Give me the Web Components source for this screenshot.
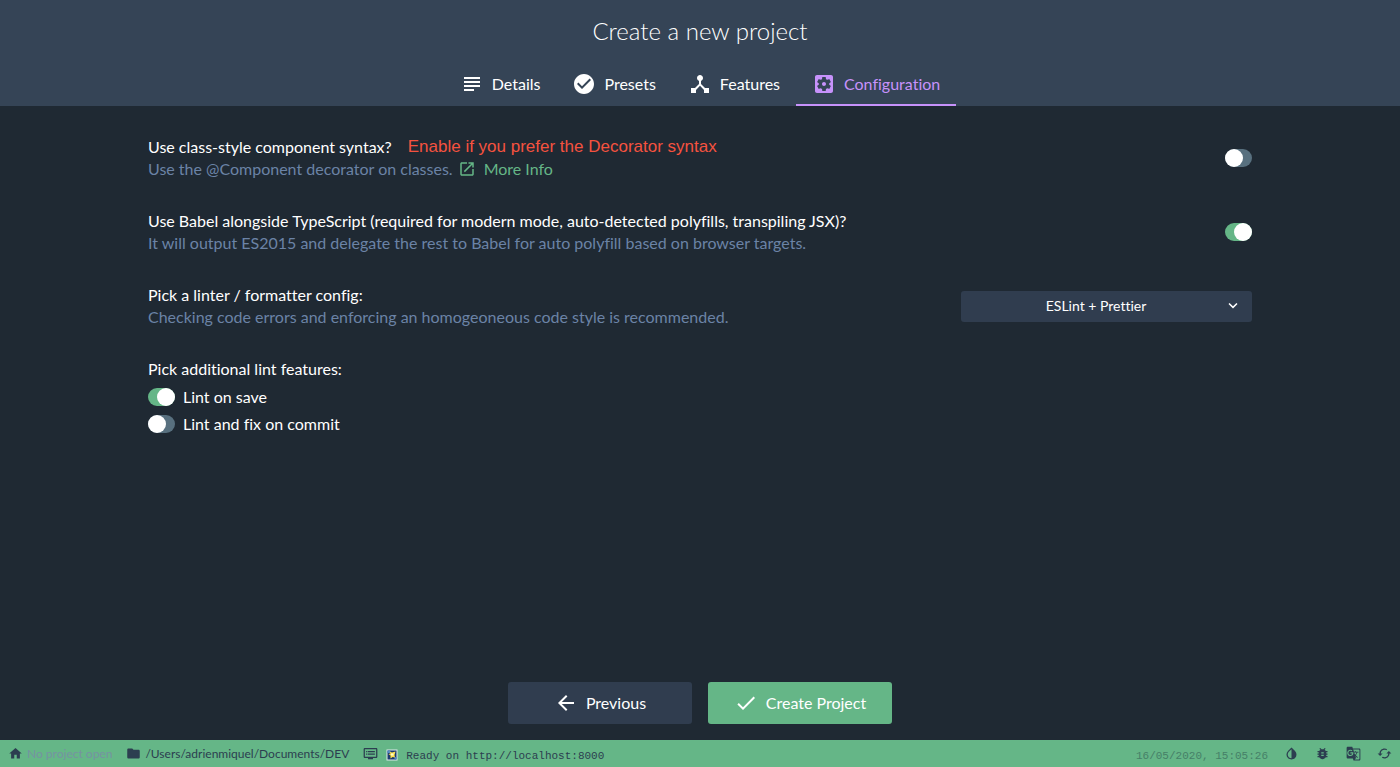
<!DOCTYPE html>
<html lang="en">
<head>
<meta charset="utf-8">
<meta name="viewport" content="width=device-width, initial-scale=1">
<title>Create a new project</title>
<style>
  body { margin: 0; background: #1f2933; color: #fff; font: 16px/22px Lato, "Open Sans", sans-serif;
    font-variant-ligatures: none; }
</style>
</head>
<body>
<project-wizard></project-wizard>
<script>
const ICONS = {
  subject: '<path d="M4 4h16v2H4zM4 8h16v2H4zM4 12h16v2H4zM4 16h10v2H4z" transform="translate(0 1)"/>',
  check_circle: '<path d="M12 2C6.48 2 2 6.48 2 12s4.48 10 10 10 10-4.48 10-10S17.52 2 12 2zm-2 15l-5-5 1.41-1.41L10 14.17l7.59-7.59L19 8l-9 9z"/>',
  device_hub: '<path d="M17 16l-4-4V8.82C14.16 8.4 15 7.3 15 6c0-1.66-1.34-3-3-3S9 4.34 9 6c0 1.3.84 2.4 2 2.82V12l-4 4H3v5h5v-3.05l4-4.2 4 4.2V21h5v-5h-4z"/>',
  settings: '<path d="M12 10c-1.1 0-2 .9-2 2s.9 2 2 2 2-.9 2-2-.9-2-2-2zm7-7H5c-1.11 0-2 .9-2 2v14c0 1.1.89 2 2 2h14c1.11 0 2-.9 2-2V5c0-1.1-.89-2-2-2zm-1.75 9c0 .23-.02.46-.05.68l1.48 1.16c.13.11.17.3.08.45l-1.4 2.42c-.09.15-.27.21-.43.15l-1.74-.7c-.36.28-.76.51-1.18.69l-.26 1.85c-.03.17-.18.3-.35.3h-2.8c-.17 0-.32-.13-.35-.29l-.26-1.85c-.43-.18-.82-.41-1.18-.69l-1.74.7c-.16.06-.34 0-.43-.15l-1.4-2.42c-.09-.15-.05-.34.08-.45l1.48-1.16c-.03-.23-.05-.46-.05-.69 0-.23.02-.46.05-.68l-1.48-1.16c-.13-.11-.17-.3-.08-.45l1.4-2.42c.09-.15.27-.21.43-.15l1.74.7c.36-.28.76-.51 1.18-.69l.26-1.85c.03-.17.18-.3.35-.3h2.8c.17 0 .32.13.35.29l.26 1.85c.43.18.82.41 1.18.69l1.74-.7c.16-.06.34 0 .43.15l1.4 2.42c.09.15.05.34-.08.45l-1.48 1.16c.03.23.05.46.05.69z"/>',
  open_in_new: '<path d="M19 19H5V5h7V3H5c-1.11 0-2 .9-2 2v14c0 1.1.89 2 2 2h14c1.1 0 2-.9 2-2v-7h-2v7zM14 3v2h3.59l-9.83 9.83 1.41 1.41L19 6.41V10h2V3h-7z"/>',
  expand: '<path d="M7.41 7.84L12 12.42l4.59-4.58L18 9.25l-6 6-6-6z"/>',
  back: '<path d="M20 11H7.83l5.59-5.59L12 4l-8 8 8 8 1.41-1.41L7.83 13H20v-2z"/>',
  done: '<path d="M9 16.2L4.8 12l-1.4 1.4L9 19 21 7l-1.4-1.4L9 16.2z"/>',
  home: '<path d="M10 20v-6h4v6h5v-8h3L12 3 2 12h3v8z"/>',
  folder: '<path d="M10 4H4c-1.1 0-1.99.9-1.99 2L2 18c0 1.1.9 2 2 2h16c1.1 0 2-.9 2-2V8c0-1.1-.9-2-2-2h-8l-2-2z"/>',
  dvr: '<path d="M21 3H3c-1.1 0-2 .9-2 2v12c0 1.1.9 2 2 2h5v2h8v-2h5c1.1 0 1.99-.9 1.99-2L23 5c0-1.1-.9-2-2-2zm0 14H3V5h18v12zm-2-9H8v2h11V8zm0 4H8v2h11v-2zM7 8H5v2h2V8zm0 4H5v2h2v-2z"/>',
  sparkle: '<path fill="#dfe9ea" d="M1 1h22v22H1z"/><path fill="#1c3a6e" d="M3 3h18v18H3z"/><path fill="#4c86c6" d="M3 3h6v5H3zM17 16h4v5h-4z"/><path fill="#ffe14a" d="M7 5l5 2 7-2-2 7 1 5-5-1-4 3v-6l-4-3 4-1z"/><path fill="#fffbd0" d="M10 9h5v4h-5z"/>',
  invert: '<path d="M17.66 7.93L12 2.27 6.34 7.93c-3.12 3.12-3.12 8.19 0 11.31C7.9 20.8 9.95 21.58 12 21.58s4.1-.78 5.66-2.34c3.12-3.12 3.12-8.19 0-11.31zM12 19.59c-1.6 0-3.11-.62-4.24-1.76C6.62 16.69 6 15.19 6 13.59s.62-3.11 1.76-4.24L12 5.1v14.49z"/>',
  bug: '<path d="M20 8h-2.81c-.45-.78-1.07-1.45-1.82-1.96L17 4.41 15.59 3l-2.17 2.17C12.96 5.06 12.49 5 12 5s-.96.06-1.41.17L8.41 3 7 4.41l1.62 1.63C7.88 6.55 7.26 7.22 6.81 8H4v2h2.09c-.05.33-.09.66-.09 1v1H4v2h2v1c0 .34.04.67.09 1H4v2h2.81c1.04 1.79 2.97 3 5.19 3s4.15-1.21 5.19-3H20v-2h-2.09c.05-.33.09-.66.09-1v-1h2v-2h-2v-1c0-.34-.04-.67-.09-1H20V8zm-6 8h-4v-2h4v2zm0-4h-4v-2h4v2z"/>',
  translate: '<path d="M21 4H11l-1-3H3c-1.1 0-2 .9-2 2v15c0 1.1.9 2 2 2h8l1 3h9c1.1 0 2-.9 2-2V6c0-1.1-.9-2-2-2zM7 16c-2.76 0-5-2.24-5-5s2.24-5 5-5c1.35 0 2.48.5 3.35 1.3L9.03 8.57c-.38-.36-1.04-.78-2.03-.78-1.74 0-3.15 1.44-3.15 3.21S5.26 14.21 7 14.21c2.01 0 2.84-1.44 2.92-2.41H7v-1.71h4.68c.07.31.12.61.12 1.02C11.8 13.97 9.89 16 7 16zm6.17-5.42h3.7c-.43 1.25-1.11 2.43-2.05 3.47-.31-.35-.6-.72-.86-1.1l-.79-2.37zm8.33 9.92c0 .55-.45 1-1 1H14l2-2.5-1.04-3.1 3.1 3.1.92-.92-3.3-3.25.02-.02c1.13-1.25 1.93-2.69 2.4-4.22H20v-1.3h-4.53V8h-1.29v1.29h-1.44L11.46 5.5h9.04c.55 0 1 .45 1 1v14z"/>',
  loop: '<path d="M19 8l-4 4h3c0 3.31-2.69 6-6 6-1.01 0-1.97-.25-2.8-.7l-1.46 1.46C8.97 19.54 10.43 20 12 20c4.42 0 8-3.58 8-8h3l-4-4zM6 12c0-3.31 2.69-6 6-6 1.01 0 1.97.25 2.8.7l1.46-1.46C15.03 4.46 13.57 4 12 4c-4.42 0-8 3.58-8 8H1l4 4 4-4H6z"/>'
};

const TOGGLE_CSS = `
  input[type=checkbox] { appearance: none; flex: none; margin: 0; width: 27px; height: 18px;
    border-radius: 9px; background: #58707f; cursor: pointer; display: flex; }
  input[type=checkbox]::before { content: ""; width: 18px; height: 18px; border-radius: 50%; background: #fff; }
  input[type=checkbox]:checked { background: #65b687; justify-content: flex-end; }
`;

function define(name, render) {
  customElements.define(name, class extends HTMLElement {
    connectedCallback() {
      if (!this.shadowRoot) this.attachShadow({ mode: 'open' }).innerHTML = render(this);
    }
  });
}

define('ui-icon', el => `
  <style>
    :host { display: block; flex: none; width: var(--icon-size, 24px); height: var(--icon-size, 24px); }
    svg { display: block; width: 100%; height: 100%; fill: currentColor; }
  </style>
  <svg viewBox="0 0 24 24" aria-hidden="true">${ICONS[el.getAttribute('name')]}</svg>`);

define('wizard-tab', el => `
  <style>
    :host { display: block; }
    a { display: flex; align-items: center; gap: 8px; height: 42px; box-sizing: border-box; padding: 0 16px;
      border-bottom: 2px solid transparent; color: #fff; text-decoration: none; }
    a[aria-current] { color: #c792fb; border-color: #c792fb; }
  </style>
  <a href="#${el.getAttribute('icon')}" ${el.hasAttribute('active') ? 'aria-current="step"' : ''}>
    <ui-icon name="${el.getAttribute('icon')}"></ui-icon><slot></slot>
  </a>`);

define('config-prompt', el => {
  const kind = el.getAttribute('kind');
  const control = kind === 'select'
    ? `<div class="select"><select id="control"><option>ESLint + Prettier</option></select><ui-icon name="expand"></ui-icon></div>`
    : `<input type="checkbox" role="switch" id="control" ${el.hasAttribute('checked') ? 'checked' : ''}>`;
  return `
  <style>
    :host { display: flex; align-items: center; justify-content: space-between; gap: 24px; }
    .title { display: flex; flex-wrap: wrap; column-gap: 16px; }
    .description { display: flex; flex-wrap: wrap; align-items: center; column-gap: 5px; color: #6b83a6; }
    ::slotted([slot=note]) { color: #f5523f; font: 17px/22px "Liberation Sans", Arial, sans-serif; }
    .select { display: grid; align-items: center; flex: 0 1 291px; }
    .select > * { grid-area: 1 / 1; }
    .select ui-icon { --icon-size: 18px; justify-self: end; margin-right: 10px; pointer-events: none; }
    select { appearance: none; width: 100%; height: 31px; border: 0; border-radius: 3px; padding: 0 32px 0 11px;
      background: #303d4f; color: #fff; font: 14px/22px Lato, sans-serif; font-variant-ligatures: none;
      text-align-last: center; }
    ${TOGGLE_CSS}
  </style>
  <div>
    <div class="title"><label for="control">${el.getAttribute('heading')}</label><slot name="note"></slot></div>
    <div class="description"><slot></slot></div>
  </div>
  ${control}`;
});

define('info-link', el => `
  <style>
    :host { display: block; }
    a { display: flex; align-items: center; gap: 8px; color: #65b687; text-decoration: none; --icon-size: 18px; }
  </style>
  <a href="${el.getAttribute('to')}"><ui-icon name="open_in_new"></ui-icon><slot></slot></a>`);

define('lint-toggle', el => `
  <style>
    :host { display: block; }
    label { display: flex; align-items: center; gap: 8px; line-height: 21px; }
    ${TOGGLE_CSS}
  </style>
  <label><input type="checkbox" role="switch" ${el.hasAttribute('checked') ? 'checked' : ''}><slot></slot></label>`);

define('wizard-button', el => `
  <style>
    :host { display: block; width: 184px; }
    button { display: flex; align-items: center; justify-content: center; gap: 8px; width: 100%; height: 42px;
      border: 0; border-radius: 3px; padding: 0 16px; background: #303d4f; color: #fff;
      font: 16px/22px Lato, sans-serif; font-variant-ligatures: none; cursor: pointer; }
    :host([primary]) button { background: #65b687; }
  </style>
  <button type="button"><ui-icon name="${el.getAttribute('icon')}"></ui-icon><slot></slot></button>`);

define('status-bar', () => `
  <style>
    :host { display: flex; align-items: center; justify-content: space-between; height: 27px; padding: 0 8px;
      background: #65b687; color: #2c3e50; font-size: 12px; --icon-size: 15px; }
    .group, .item { display: flex; align-items: center; }
    .group { gap: 16px; }
    .group.start { gap: 14px; }
    .item { gap: 4px; }
    .muted { color: #7692a2; }
    .log { gap: 8px; }
    .mono { font: 11px/16px "Liberation Mono", "Courier New", monospace; padding-top: 4px; }
    .log .emoji { --icon-size: 12px; padding-top: 2px; }
    time { color: #458068; }
    button { border: 0; padding: 0; background: none; color: inherit; }
  </style>
  <div class="group start">
    <span class="item"><ui-icon name="home"></ui-icon><span class="muted">No project open</span></span>
    <span class="item"><ui-icon name="folder"></ui-icon><span>/Users/adrienmiquel/Documents/DEV</span></span>
    <span class="item log"><ui-icon name="dvr"></ui-icon><span class="emoji"><ui-icon name="sparkle"></ui-icon></span><span class="mono">Ready on http://localhost:8000</span></span>
  </div>
  <div class="group">
    <time class="mono" datetime="2020-05-16T15:05:26">16/05/2020, 15:05:26</time>
    <button type="button" aria-label="Toggle dark mode"><ui-icon name="invert"></ui-icon></button>
    <button type="button" aria-label="Report a bug"><ui-icon name="bug"></ui-icon></button>
    <button type="button" aria-label="Translate"><ui-icon name="translate"></ui-icon></button>
    <button type="button" aria-label="Refresh"><ui-icon name="loop"></ui-icon></button>
  </div>`);

define('project-wizard', () => `
  <style>
    :host { display: flex; flex-direction: column; min-height: 100vh; }
    header { background: #354456; text-align: center; }
    h1 { margin: 0; padding: 16px 16px 18px; font-size: 24px; line-height: 30px; font-weight: 300; }
    nav { display: flex; justify-content: center; flex-wrap: wrap; }
    main { flex: 1; width: calc(100% - 32px); max-width: 1104px; margin: 0 auto; padding: 30px 0;
      box-sizing: border-box; display: flex; flex-direction: column; gap: 30px; }
    fieldset { border: 0; margin: 0; padding: 0; display: flex; flex-direction: column; gap: 6px; }
    legend { padding: 0 0 6px; }
    .actions { display: flex; justify-content: center; gap: 16px; padding: 16px; }
  </style>
  <header>
    <h1>Create a new project</h1>
    <nav>
      <wizard-tab icon="subject">Details</wizard-tab>
      <wizard-tab icon="check_circle">Presets</wizard-tab>
      <wizard-tab icon="device_hub">Features</wizard-tab>
      <wizard-tab icon="settings" active>Configuration</wizard-tab>
    </nav>
  </header>
  <main>
    <config-prompt kind="toggle" heading="Use class-style component syntax?">
      <span slot="note">Enable if you prefer the Decorator syntax</span>
      <span>Use the @Component decorator on classes.</span>
      <info-link to="#class-component">More Info</info-link>
    </config-prompt>
    <config-prompt kind="toggle" checked heading="Use Babel alongside TypeScript (required for modern mode, auto-detected polyfills, transpiling JSX)?">
      <span>It will output ES2015 and delegate the rest to Babel for auto polyfill based on browser targets.</span>
    </config-prompt>
    <config-prompt kind="select" heading="Pick a linter / formatter config:">
      <span>Checking code errors and enforcing an homogeoneous code style is recommended.</span>
    </config-prompt>
    <fieldset>
      <legend>Pick additional lint features:</legend>
      <lint-toggle checked>Lint on save</lint-toggle>
      <lint-toggle>Lint and fix on commit</lint-toggle>
    </fieldset>
  </main>
  <div class="actions">
    <wizard-button icon="back">Previous</wizard-button>
    <wizard-button icon="done" primary>Create Project</wizard-button>
  </div>
  <status-bar></status-bar>`);
</script>
</body>
</html>
